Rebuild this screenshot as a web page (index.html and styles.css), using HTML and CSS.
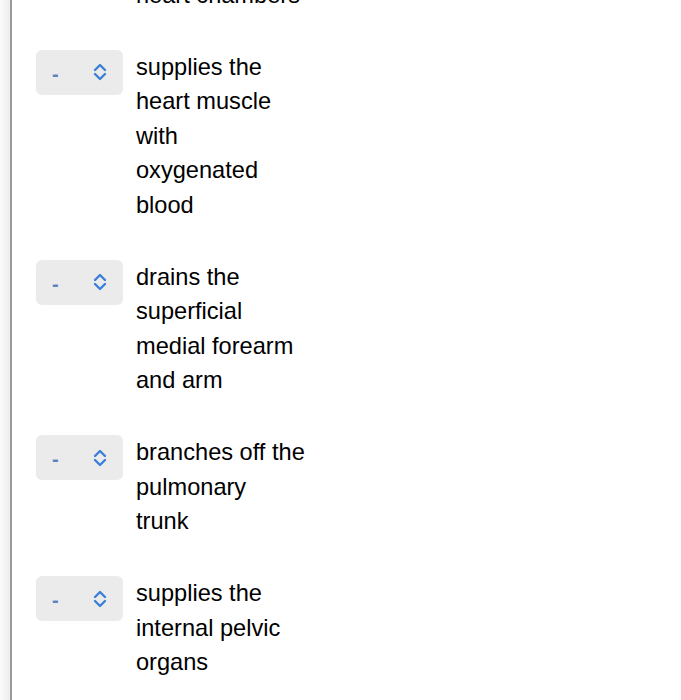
FILE: index.html
```html
<!DOCTYPE html>
<html lang="en">
<head>
<meta charset="utf-8">
<title>Matching</title>
<link rel="stylesheet" href="styles.css">
</head>
<body>
<div class="page">
  <div class="rail"></div>
  <main class="list">
    <div class="row row-partial">
      <div class="select"><span class="val">-</span><svg class="chev" viewBox="0 0 16 20" width="16" height="20"><path d="M3 8 L8 3 L13 8 M3 12 L8 17 L13 12" fill="none" stroke="#3b7fd9" stroke-width="2.4" stroke-linecap="round" stroke-linejoin="round"/></svg></div>
      <p class="desc">from the<br>heart chambers</p>
    </div>
    <div class="row">
      <div class="select"><span class="val">-</span><svg class="chev" viewBox="0 0 16 20" width="16" height="20"><path d="M3 8 L8 3 L13 8 M3 12 L8 17 L13 12" fill="none" stroke="#3b7fd9" stroke-width="2.4" stroke-linecap="round" stroke-linejoin="round"/></svg></div>
      <p class="desc">supplies the<br>heart muscle<br>with<br>oxygenated<br>blood</p>
    </div>
    <div class="row">
      <div class="select"><span class="val">-</span><svg class="chev" viewBox="0 0 16 20" width="16" height="20"><path d="M3 8 L8 3 L13 8 M3 12 L8 17 L13 12" fill="none" stroke="#3b7fd9" stroke-width="2.4" stroke-linecap="round" stroke-linejoin="round"/></svg></div>
      <p class="desc">drains the<br>superficial<br>medial forearm<br>and arm</p>
    </div>
    <div class="row">
      <div class="select"><span class="val">-</span><svg class="chev" viewBox="0 0 16 20" width="16" height="20"><path d="M3 8 L8 3 L13 8 M3 12 L8 17 L13 12" fill="none" stroke="#3b7fd9" stroke-width="2.4" stroke-linecap="round" stroke-linejoin="round"/></svg></div>
      <p class="desc">branches off the<br>pulmonary<br>trunk</p>
    </div>
    <div class="row">
      <div class="select"><span class="val">-</span><svg class="chev" viewBox="0 0 16 20" width="16" height="20"><path d="M3 8 L8 3 L13 8 M3 12 L8 17 L13 12" fill="none" stroke="#3b7fd9" stroke-width="2.4" stroke-linecap="round" stroke-linejoin="round"/></svg></div>
      <p class="desc">supplies the<br>internal pelvic<br>organs</p>
    </div>
  </main>
</div>
</body>
</html>
```
FILE: styles.css
```css
html, body {
  margin: 0;
  padding: 0;
  background: #ffffff;
  height: 100%;
  overflow: hidden;
}

.page {
  display: flex;
  height: 100%;
  font-family: "Liberation Sans", Arial, Helvetica, sans-serif;
  color: #000000;
}

.rail {
  flex: 0 0 10px;
  background: linear-gradient(to right, #fbfbfb, #ededed);
  border-right: 2px solid #9a9a9a;
}

.list {
  flex: 1;
  padding-left: 24px;
  display: flex;
  flex-direction: column;
  gap: 37.5px;
  margin-top: -57px;
}

.row {
  display: flex;
  align-items: flex-start;
  gap: 13px;
}

.select {
  flex: 0 0 auto;
  width: 87px;
  height: 45px;
  box-sizing: border-box;
  background: #ebebeb;
  border-radius: 6px;
  display: flex;
  align-items: center;
  justify-content: space-between;
  padding: 0 15px 0 16px;
}

.val {
  font-size: 20px;
  font-weight: bold;
  color: #5a82bd;
  line-height: 1;
  padding-top: 3px;
}

.chev {
  display: block;
}

.desc {
  margin: 0;
  font-size: 23.6px;
  line-height: 34.5px;
}
```
